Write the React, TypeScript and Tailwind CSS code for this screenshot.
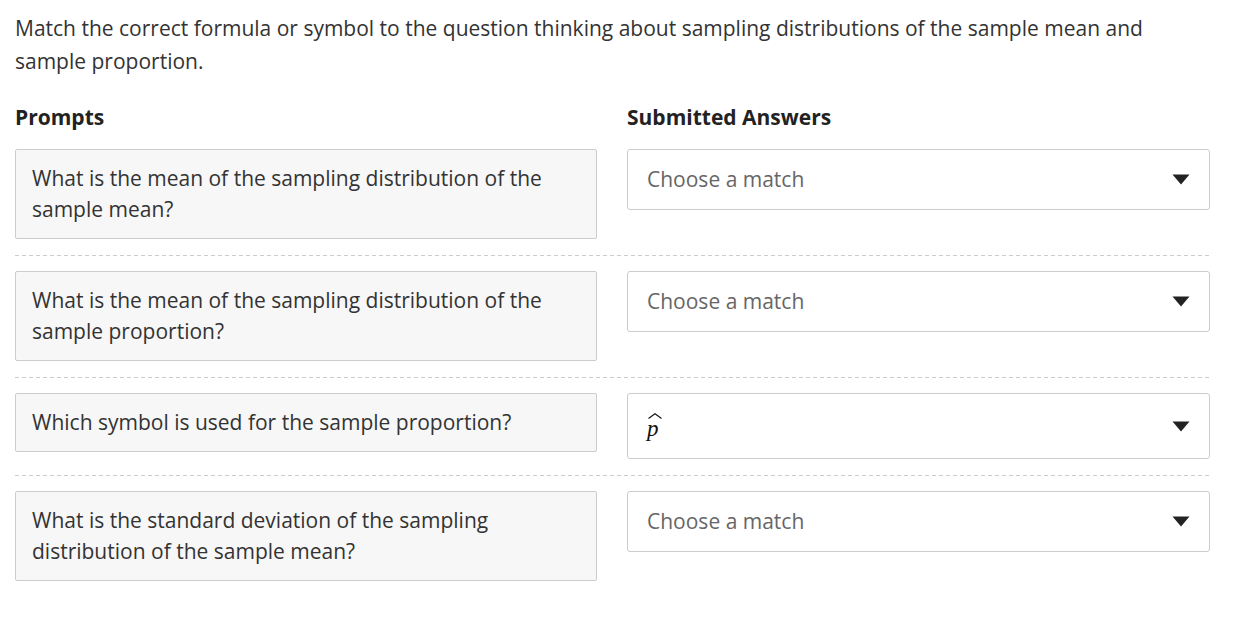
import { ReactNode } from 'react';

type Row = { prompt: string; answer?: 'phat' };

const rows: Row[] = [
  { prompt: 'What is the mean of the sampling distribution of the sample mean?' },
  { prompt: 'What is the mean of the sampling distribution of the sample proportion?' },
  { prompt: 'Which symbol is used for the sample proportion?', answer: 'phat' },
  { prompt: 'What is the standard deviation of the sampling distribution of the sample mean?' },
];

function PHat() {
  return (
    <div className="flex flex-col items-start h-[36px] pt-[5px]">
      <svg width="14" height="6" viewBox="0 0 14 6" className="block ml-[1px]">
        <path d="M0.5 5.5 L7 0.8 L13.5 5.5" fill="none" stroke="#111" strokeWidth="1.1" />
      </svg>
      <span className="block font-['Liberation_Serif',serif] italic text-[23px] leading-[22px] text-[#111] -mt-[1px]">
        p
      </span>
    </div>
  );
}

function Select({ children }: { children: ReactNode }) {
  return (
    <div className="flex items-center justify-between border border-[#cccccc] rounded-[3px] bg-white pl-[19px] pr-[19px] py-[14px]">
      <div className="flex items-center min-h-[31px] leading-[31px] text-[#666666]">{children}</div>
      <svg width="18" height="11" viewBox="0 0 18 11" className="shrink-0">
        <path d="M0.5 0.5 H17.5 L9 10.5 Z" fill="#222" />
      </svg>
    </div>
  );
}

export default function App() {
  return (
    <div className="bg-white min-h-[620px] pl-[15px] pt-[12px] font-['Open_Sans',sans-serif] text-[21px] text-[#333333]">
      <div className="w-[1195px]">
        <p className="leading-[33px]">
          Match the correct formula or symbol to the question thinking about sampling distributions of the sample mean and
          sample proportion.
        </p>

        <div className="grid grid-cols-[582px_583px] gap-x-[30px] mt-[25px] mb-[18px] font-bold text-[#222222] text-[21px] leading-[28px]">
          <div>Prompts</div>
          <div>Submitted Answers</div>
        </div>

        {rows.map((row, i) => (
          <div key={i}>
            <div className="grid grid-cols-[582px_583px] gap-x-[30px] items-start">
              <div className="bg-[#f7f7f7] border border-[#cccccc] rounded-[2px] px-[16px] py-[13px] leading-[31px]">
                {row.prompt}
              </div>
              <Select>{row.answer === 'phat' ? <PHat /> : 'Choose a match'}</Select>
            </div>
            {i < rows.length - 1 && (
              <div className="h-px mt-[16px] mb-[15px] bg-[repeating-linear-gradient(to_right,#cccccc_0_4px,transparent_4px_7px)]" />
            )}
          </div>
        ))}
      </div>
    </div>
  );
}
